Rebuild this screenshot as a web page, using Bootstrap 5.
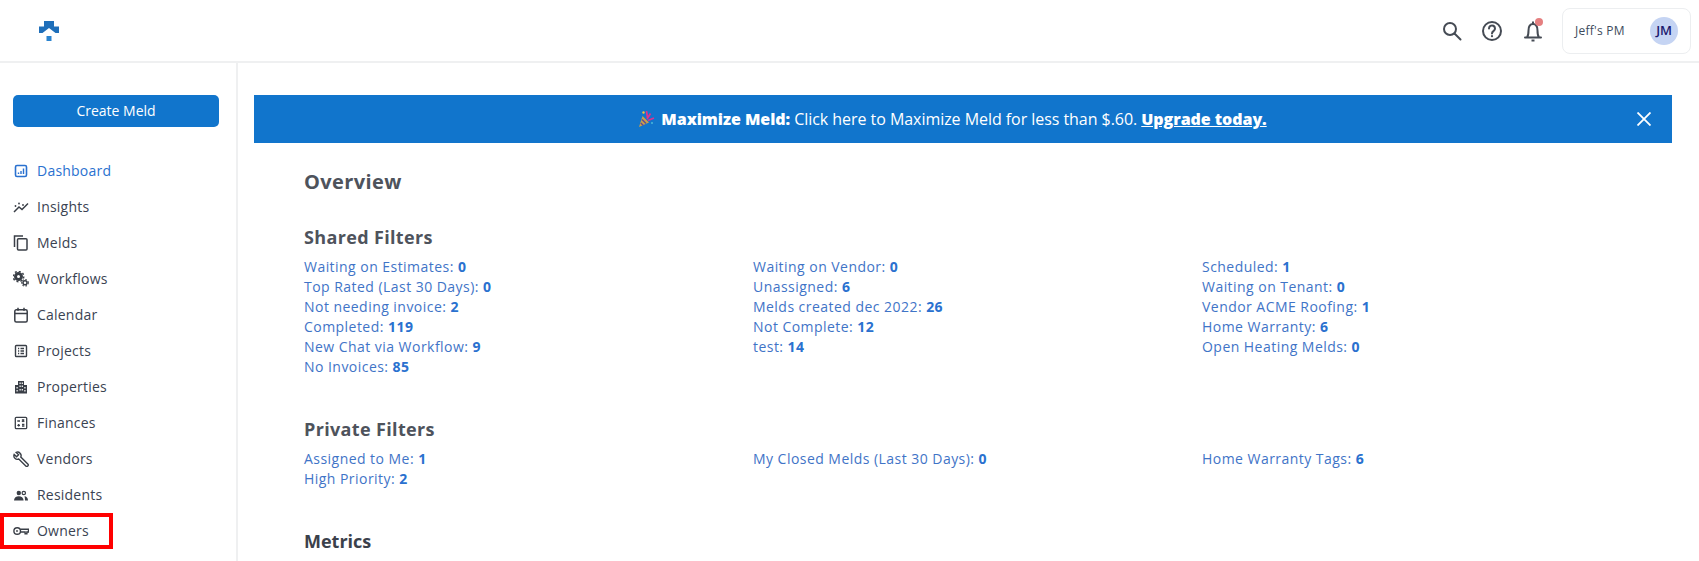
<!DOCTYPE html>
<html lang="en"><head><meta charset="utf-8"><title>Meld</title>
<link href="https://cdn.jsdelivr.net/npm/bootstrap@5.3.0/dist/css/bootstrap.min.css" rel="stylesheet">
<style>
html,body{height:100%;overflow:hidden}
body{font-family:"Open Sans",sans-serif;color:#3d4450;font-size:14px;background:#fff}
.topbar{height:63px;border-bottom:2px solid #eff0f1;padding-right:8px}
.brand{margin-left:39px}
.ticon{color:#454b54;display:block}
.acct{width:129px;height:46px;border:1px solid #eceef0;border-radius:8px;padding:0 12px;font-size:12px;margin-left:20px;color:#3d4a5c;letter-spacing:.25px}
.avatar{width:28px;height:28px;border-radius:50%;background:#c5d4f3;color:#1c1a6e;font-weight:600;font-size:13px;letter-spacing:-.3px}
.dot{position:absolute;width:8px;height:8px;border-radius:50%;background:#e57f80;top:-2px;right:-1px}
.sidebar{width:238px;border-right:2px solid #eff0f1;padding:32px 17px 0 13px;flex:none}
.create{height:32px;background:#1175cc;border:0;border-radius:5px;font-size:14px;color:#fff;padding:0 0 2px;width:100%;display:block}
.create:hover{background:#1175cc;color:#fff}
.menu{margin-top:26px}
.mitem{height:36px;font-size:14px;font-weight:500;color:#3a4352;text-decoration:none;gap:8px;letter-spacing:.22px;position:relative;padding-bottom:1px}
.mitem svg{width:16px;height:16px;flex:none;color:#3a3f47}
.mitem.on,.mitem.on svg{color:#2a71cf}
.redbox{position:absolute;left:-13px;top:0;width:113px;height:36px;border:4px solid #f00}
.main{padding:32px 27px 0 16px;min-width:0}
.promo{height:48px;background:#1175cc;color:#fff;font-size:16px;position:relative;text-decoration:none;padding-right:22px;letter-spacing:-.05px}
.promo b,.promo u{font-weight:800}
.closex{position:absolute;right:21px;top:17px}
.body-wrap{padding:0 0 0 51px;margin-left:-1px}
.h-over{font-size:20px;font-weight:700;color:#4e535c;margin:25px 0 0;line-height:27px;letter-spacing:.4px}
.h-sec{font-size:18px;font-weight:700;color:#4e535c;margin:0;line-height:24px;letter-spacing:.35px}
.h-metric{font-size:18px;font-weight:700;color:#3b414b;margin:0;line-height:24px}
.cols{display:grid;grid-template-columns:449px 449px 449px;margin-top:8px}
.flink{display:block;color:#3f74c7;font-size:14px;line-height:20px;text-decoration:none;letter-spacing:.46px}
.flink b{font-weight:700;color:#2a71cf}
</style></head>
<body class="d-flex flex-column">
<header class="topbar d-flex align-items-center justify-content-between flex-shrink-0">
  <svg class="brand" width="20" height="20" viewBox="0 0 20 20"><path d="M5 0h10v5.500h5V12h-3.500L10 7l-6.500 5H0V5.500h5z" fill="#1f6fba"/><rect x="7.500" y="15" width="5" height="5" fill="#2a83cf"/></svg>
  <div class="d-flex align-items-center">
    <svg class="ticon" width="20" height="20" viewBox="0 0 20 20" fill="none" stroke="currentColor" stroke-width="2"><circle cx="8" cy="8" r="6"/><path d="M12.500 12.500l6 6" stroke-linecap="round"/></svg>
    <svg class="ticon" style="margin-left:19px" width="22" height="22" viewBox="0 0 22 22" fill="none" stroke="currentColor" stroke-width="2"><circle cx="11" cy="11" r="9"/><path d="M8 8.500a3 3 0 1 1 4.700 2.400c-1.100.8-1.700 1.300-1.700 2.600" stroke-linecap="round"/><circle cx="11" cy="16.200" r="1.100" fill="currentColor" stroke="none"/></svg>
    <span class="position-relative" style="margin-left:21px;width:18px;height:22px;display:block">
      <svg class="ticon" width="18" height="22" viewBox="0 0 18 22" fill="none" stroke="currentColor" stroke-width="2"><path d="M1 17.500h16M3 17.500c1.500-2 1.500-4 1.500-7C4.500 7 6 4 9 4s4.500 3 4.500 6.500c0 3 0 5 1.500 7" stroke-linecap="round"/><path d="M7.500 20.500h3"/><path d="M9 1.500V4"/></svg>
      <span class="dot"></span>
    </span>
    <div class="acct d-flex align-items-center justify-content-between"><span>Jeff's PM</span><span class="avatar d-flex align-items-center justify-content-center">JM</span></div>
  </div>
</header>
<div class="d-flex flex-grow-1" style="min-height:0">
  <aside class="sidebar">
    <button class="btn create" type="button">Create Meld</button>
    <nav class="menu d-flex flex-column">
      <a class="mitem on d-flex align-items-center" href="#"><svg viewBox="0 0 16 16" fill="none" stroke="currentColor"><rect x="2.500" y="2.500" width="11" height="11" rx="1.500" stroke-width="1.600"/><path d="M5.500 11V9.500M8 11V8M10.500 11V5.500" stroke-width="1.400"/></svg>Dashboard</a>
      <a class="mitem d-flex align-items-center" href="#"><svg viewBox="0 0 16 16" fill="none" stroke="currentColor" stroke-width="1.500"><path d="M1 13L6 8l3 2.500 6-6"/><circle cx="2.500" cy="7" r=".9" fill="currentColor" stroke="none"/><circle cx="6" cy="4.500" r=".9" fill="currentColor" stroke="none"/><circle cx="10" cy="6" r=".9" fill="currentColor" stroke="none"/></svg>Insights</a>
      <a class="mitem d-flex align-items-center" href="#"><svg viewBox="0 0 16 16" fill="none" stroke="currentColor" stroke-width="1.500"><path d="M1.500 12V1h8.500"/><rect x="4.500" y="3.800" width="9.500" height="11.200" rx="1"/></svg>Melds</a>
      <a class="mitem d-flex align-items-center" href="#"><svg viewBox="0 0 16 16"><circle cx="5.500" cy="5.500" r="3" fill="none" stroke="currentColor" stroke-width="3"/><circle cx="5.500" cy="5.500" r="5.300" fill="none" stroke="currentColor" stroke-width="1.400" stroke-dasharray="2 2.100"/><circle cx="12" cy="11.800" r="2" fill="none" stroke="currentColor" stroke-width="1.500"/><circle cx="12" cy="11.800" r="3.300" fill="none" stroke="currentColor" stroke-width="1.100" stroke-dasharray="1.500 1.600"/></svg>Workflows</a>
      <a class="mitem d-flex align-items-center" href="#"><svg viewBox="0 0 16 16" fill="none" stroke="currentColor" stroke-width="1.500"><rect x="1.800" y="2.800" width="12.400" height="12.200" rx="1.500"/><path d="M1.800 6.500h12.400M5 .8v3M11 .8v3"/></svg>Calendar</a>
      <a class="mitem d-flex align-items-center" href="#"><svg viewBox="0 0 16 16" fill="none" stroke="currentColor" stroke-width="1.400"><rect x="2.500" y="2.500" width="11" height="11" rx=".8"/><path d="M5 5.500h1.200M5 8h1.200M5 10.500h1.200M7.500 5.500H11M7.500 8H11M7.500 10.500H11"/></svg>Projects</a>
      <a class="mitem d-flex align-items-center" href="#"><svg viewBox="0 0 16 16" fill="currentColor"><path fill-rule="evenodd" d="M5 2h6v4h3v8.500H2V6h3zM6.500 3.500v1.500h1.200V3.500zM8.700 3.500v1.500h1.200V3.500zM6.500 6.500V8h1.200V6.500zM8.700 6.500V8h1.200V6.500zM3.500 8v1.500h1.200V8zM11.300 8v1.500h1.200V8zM3.500 11v1.500h1.200V11zM6.500 10v1.500h1.200V10zM8.700 10v1.500h1.200V10zM11.300 11v1.500h1.200V11z"/></svg>Properties</a>
      <a class="mitem d-flex align-items-center" href="#"><svg viewBox="0 0 16 16" fill="none" stroke="currentColor" stroke-width="1.300"><rect x="2.300" y="2.300" width="11.400" height="11.400" rx="1"/><path d="M4.300 6h2.700M9 4.500l2.200 2.200M11.200 4.500L9 6.700M4.300 10.300h2.700M5.650 9v2.600M9 9.500h2.400M9 11.200h2.400"/></svg>Finances</a>
      <a class="mitem d-flex align-items-center" href="#"><svg viewBox="0 0 16 16" fill="none" stroke="currentColor" stroke-width="1.400"><path d="M1.200 3.400L3.600 5.800l2-2L3.200 1.400a3.500 3.500 0 0 1 4.600 4.600l7 7a1.300 1.300 0 0 1-2 2l-7-7a3.500 3.500 0 0 1-4.600-4.600z"/></svg>Vendors</a>
      <a class="mitem d-flex align-items-center" href="#"><svg viewBox="0 0 16 16" fill="currentColor"><circle cx="5.800" cy="6" r="2.200"/><circle cx="10.800" cy="6" r="1.700" fill="none" stroke="currentColor" stroke-width="1.200"/><path d="M1 13.500c0-2.800 2.200-4.300 4.800-4.300s4.800 1.500 4.800 4.300zM11.500 9.300c2 .2 3.500 1.500 3.500 4.200h-3c0-1.500-.2-3-.5-4.200z"/></svg>Residents</a>
      <a class="mitem d-flex align-items-center" href="#"><svg viewBox="0 0 16 16" fill="none" stroke="currentColor" stroke-width="1.400"><circle cx="4.200" cy="8" r="3.300"/><circle cx="4" cy="8" r=".9" fill="currentColor" stroke="none"/><path d="M7.500 6.300h8V9h-1.600v1.800h-1.800V9H7.500"/></svg>Owners<span class="redbox"></span></a>
    </nav>
  </aside>
  <main class="main flex-grow-1">
    <a class="promo d-flex align-items-center justify-content-center" href="#">
      <svg width="18" height="18" viewBox="0 0 18 18" style="margin-right:6px"><path d="M2 17L5.500 6l6.500 6.500z" fill="#c9a04a"/><path d="M3.800 13l2.500 2.500M5 9.500l4 4" stroke="#5c4a9a" stroke-width="1.400"/><path d="M9.500 1l1 6.500M13.500 3.500L10 9M17 8l-6 2.500" stroke="#e0308f" stroke-width="1.700"/><circle cx="6.500" cy="2.500" r="1.200" fill="#f2c23e"/><circle cx="15" cy="13" r="1" fill="#4bb8d8"/></svg>
      <span><b>Maximize Meld:</b> Click here to Maximize Meld for less than $.60. <u>Upgrade today.</u></span>
      <svg class="closex" width="14" height="14" viewBox="0 0 14 14" stroke="#fff" stroke-width="1.800"><path d="M0.500 0.500l13 13M13.500 0.500l-13 13"/></svg>
    </a>
    <div class="body-wrap">
      <h1 class="h-over">Overview</h1>
      <section style="margin-top:30px">
        <h2 class="h-sec">Shared Filters</h2>
        <div class="cols">
          <div>
            <a class="flink" href="#">Waiting on Estimates: <b>0</b></a>
            <a class="flink" href="#">Top Rated (Last 30 Days): <b>0</b></a>
            <a class="flink" href="#">Not needing invoice: <b>2</b></a>
            <a class="flink" href="#">Completed: <b>119</b></a>
            <a class="flink" href="#">New Chat via Workflow: <b>9</b></a>
            <a class="flink" href="#">No Invoices: <b>85</b></a>
          </div>
          <div>
            <a class="flink" href="#">Waiting on Vendor: <b>0</b></a>
            <a class="flink" href="#">Unassigned: <b>6</b></a>
            <a class="flink" href="#">Melds created dec 2022: <b>26</b></a>
            <a class="flink" href="#">Not Complete: <b>12</b></a>
            <a class="flink" href="#">test: <b>14</b></a>
          </div>
          <div>
            <a class="flink" href="#">Scheduled: <b>1</b></a>
            <a class="flink" href="#">Waiting on Tenant: <b>0</b></a>
            <a class="flink" href="#">Vendor ACME Roofing: <b>1</b></a>
            <a class="flink" href="#">Home Warranty: <b>6</b></a>
            <a class="flink" href="#">Open Heating Melds: <b>0</b></a>
          </div>
        </div>
      </section>
      <section style="margin-top:40px">
        <h2 class="h-sec">Private Filters</h2>
        <div class="cols">
          <div>
            <a class="flink" href="#">Assigned to Me: <b>1</b></a>
            <a class="flink" href="#">High Priority: <b>2</b></a>
          </div>
          <div><a class="flink" href="#">My Closed Melds (Last 30 Days): <b>0</b></a></div>
          <div><a class="flink" href="#">Home Warranty Tags: <b>6</b></a></div>
        </div>
      </section>
      <h2 class="h-metric" style="margin-top:40px">Metrics</h2>
    </div>
  </main>
</div>
</body></html>
